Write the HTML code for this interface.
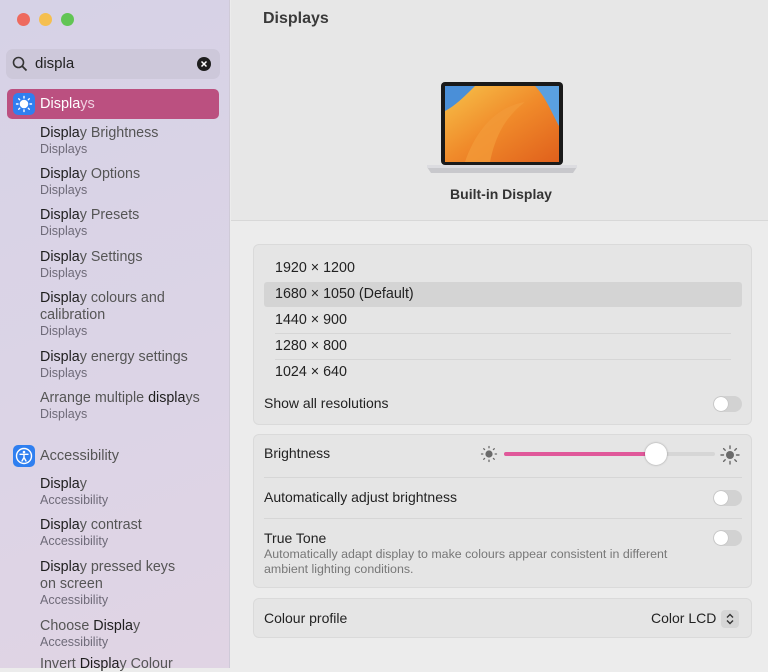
<!DOCTYPE html>
<html><head><meta charset="utf-8"><style>
*{margin:0;padding:0;box-sizing:border-box}
body{width:768px;height:668px;overflow:hidden;font-family:"Liberation Sans",sans-serif;background:#ececec;position:relative;color:#222}
.sb{position:absolute;left:0;top:0;width:230px;height:668px;background:linear-gradient(160deg,#d6d2e6 0%,#dcd4e6 60%,#e0d4e4 100%);border-right:1px solid #cfcad8}
.a{position:absolute;font-size:14px;white-space:nowrap}
.sb .a{font-size:14.3px}
.t{color:#555}.t b{color:#1e1e1e;font-weight:normal}
.sb .s{color:#6e6a78;font-size:12.5px}
.dot{position:absolute;top:13px;width:13px;height:13px;border-radius:50%}
.main{position:absolute;left:231px;top:0;width:537px;height:668px}
.card{position:absolute;left:22px;width:499px;background:#e5e5e5;border:1px solid #dadada;border-radius:6px}
.tg{position:absolute;width:29px;height:16px;border-radius:8px;background:#d2d2d2}
.tg::after{content:"";position:absolute;left:1px;top:1px;width:14px;height:14px;border-radius:50%;background:#fff;box-shadow:0 0 1px rgba(0,0,0,.3)}
.sep{position:absolute;height:1px;background:#d6d6d6}
</style></head><body>
<div class="sb">
<div class="dot" style="left:17px;background:#ee6a5e"></div>
<div class="dot" style="left:39px;background:#f5bf4f"></div>
<div class="dot" style="left:61px;background:#61c554"></div>
<div style="position:absolute;left:6px;top:49px;width:214px;height:30px;background:#cdc8da;border-radius:7px"></div>
<svg style="position:absolute;left:12px;top:56px" width="16" height="16"><circle cx="6.5" cy="6.5" r="5" fill="none" stroke="#333" stroke-width="1.6"/><line x1="10.3" y1="10.3" x2="14.5" y2="14.5" stroke="#333" stroke-width="1.8"/></svg>
<div class="a" style="left:35px;top:55px;font-size:15px;color:#222">displa</div>
<svg style="position:absolute;left:197px;top:57px" width="14" height="14"><circle cx="7" cy="7" r="7" fill="#1e1e1e"/><path d="M4.5 4.5l5 5M9.5 4.5l-5 5" stroke="#fff" stroke-width="1.5"/></svg>
<div style="position:absolute;left:7px;top:89px;width:212px;height:30px;background:#bb5080;border-radius:5px"></div>
<div style="position:absolute;left:13px;top:93px;width:22px;height:22px;background:#2f7ff0;border-radius:5px"></div>
<svg style="position:absolute;left:13px;top:93px" width="22" height="22"><circle cx="11" cy="11" r="4.3" fill="#fff"/><g stroke="#fff" stroke-width="1.4" stroke-linecap="round"><path d="M11 3.5v1.5M11 17v1.5M3.5 11h1.5M17 11h1.5M5.7 5.7l1 1M15.3 15.3l1 1M5.7 16.3l1-1M15.3 6.7l1-1"/></g></svg>
<div class="a" style="left:40px;top:96px;font-size:14.5px;color:#fff">Displa<span style="color:#f0d0e0">ys</span></div>
<div class="a t" style="left:40px;top:125px"><b>Displa</b>y Brightness</div><div class="a s" style="left:40px;top:142px">Displays</div>
<div class="a t" style="left:40px;top:166px"><b>Displa</b>y Options</div><div class="a s" style="left:40px;top:183px">Displays</div>
<div class="a t" style="left:40px;top:207px"><b>Displa</b>y Presets</div><div class="a s" style="left:40px;top:224px">Displays</div>
<div class="a t" style="left:40px;top:249px"><b>Displa</b>y Settings</div><div class="a s" style="left:40px;top:266px">Displays</div>
<div class="a t" style="left:40px;top:290px"><b>Displa</b>y colours and</div><div class="a t" style="left:40px;top:307px">calibration</div><div class="a s" style="left:40px;top:324px">Displays</div>
<div class="a t" style="left:40px;top:349px"><b>Displa</b>y energy settings</div><div class="a s" style="left:40px;top:366px">Displays</div>
<div class="a t" style="left:40px;top:390px">Arrange multiple <b>displa</b>ys</div><div class="a s" style="left:40px;top:407px">Displays</div>
<div style="position:absolute;left:13px;top:445px;width:22px;height:22px;background:#2f7ff0;border-radius:5px"></div>
<svg style="position:absolute;left:13px;top:445px" width="22" height="22"><circle cx="11" cy="11" r="7.5" fill="none" stroke="#fff" stroke-width="1.4"/><circle cx="11" cy="7" r="1.3" fill="#fff"/><path d="M7 9.3h8M11 9.3v3.5M11 12.5l-2 3.5M11 12.5l2 3.5" stroke="#fff" stroke-width="1.4" fill="none" stroke-linecap="round"/></svg>
<div class="a t" style="left:40px;top:448px;font-size:14.5px">Accessibility</div>
<div class="a t" style="left:40px;top:476px"><b>Displa</b>y</div><div class="a s" style="left:40px;top:493px">Accessibility</div>
<div class="a t" style="left:40px;top:517px"><b>Displa</b>y contrast</div><div class="a s" style="left:40px;top:534px">Accessibility</div>
<div class="a t" style="left:40px;top:559px"><b>Displa</b>y pressed keys</div><div class="a t" style="left:40px;top:576px">on screen</div><div class="a s" style="left:40px;top:593px">Accessibility</div>
<div class="a t" style="left:40px;top:618px">Choose <b>Displa</b>y</div><div class="a s" style="left:40px;top:635px">Accessibility</div>
<div class="a t" style="left:40px;top:656px">Invert <b>Displa</b>y Colour</div>
</div>
<div class="main">
<div style="position:absolute;left:0;top:0;width:537px;height:221px;background:#e7e7e7;border-bottom:1px solid #d8d8d8"></div>
<div class="a" style="left:32px;top:10px;font-size:16px;font-weight:bold;color:#3a3a3a">Displays</div>
<svg style="position:absolute;left:194px;top:81px" width="154" height="96">
<defs><linearGradient id="w" x1="0" y1="0" x2="1" y2="1"><stop offset="0" stop-color="#f7c24a"/><stop offset=".5" stop-color="#f08a2a"/><stop offset="1" stop-color="#e0601c"/></linearGradient></defs>
<rect x="16" y="1" width="122" height="83" rx="4" fill="#1a1a1a"/>
<rect x="20" y="5" width="114" height="76" fill="url(#w)"/>
<path d="M20 5h30c-10 10-20 20-30 25z" fill="#4a8fd8"/><path d="M110 5h24v40c-8-15-14-30-24-40z" fill="#5aa0e0"/>
<path d="M40 81c10-30 30-55 60-60c-20 15-30 35-35 60z" fill="#f39a38" opacity=".8"/>
<path d="M2 86h150l-4 6H6z" fill="#c8c8cc"/><rect x="2" y="84" width="150" height="3" fill="#dcdce0"/>
</svg>
<div class="a" style="left:0;width:540px;text-align:center;top:186px;font-weight:bold;font-size:14px;color:#333">Built-in Display</div>
<div class="card" style="top:244px;height:181px">
<div class="a" style="left:21px;top:15px;font-size:14.3px">1920 × 1200</div>
<div style="position:absolute;left:10px;top:37px;width:478px;height:25px;background:#d4d4d4;border-radius:3px"></div>
<div class="a" style="left:21px;top:41px;font-size:14.3px">1680 × 1050 (Default)</div>
<div class="a" style="left:21px;top:67px;font-size:14.3px">1440 × 900</div>
<div class="sep" style="left:21px;top:88px;width:456px"></div>
<div class="a" style="left:21px;top:93px;font-size:14.3px">1280 × 800</div>
<div class="sep" style="left:21px;top:114px;width:456px"></div>
<div class="a" style="left:21px;top:119px;font-size:14.3px">1024 × 640</div>
<div class="a" style="left:10px;top:150px">Show all resolutions</div>
<div class="tg" style="left:459px;top:151px"></div>
</div>
<div class="card" style="top:434px;height:154px">
<div class="a" style="left:10px;top:10px">Brightness</div>
<svg style="position:absolute;left:226px;top:10px" width="18" height="18"><circle cx="9" cy="9" r="3.6" fill="#6a6a6a"/><g stroke="#6a6a6a" stroke-width="1.3" stroke-linecap="round"><path d="M9 1.5v1.3M9 15.2v1.3M1.5 9h1.3M15.2 9h1.3M3.7 3.7l.9.9M13.4 13.4l.9.9M3.7 14.3l.9-.9M13.4 4.6l.9-.9"/></g></svg>
<div style="position:absolute;left:250px;top:17px;width:211px;height:4px;border-radius:2px;background:#d6d6d6"></div>
<div style="position:absolute;left:250px;top:17px;width:152px;height:4px;border-radius:2px;background:#e0589a"></div>
<div style="position:absolute;left:391px;top:8px;width:22px;height:22px;border-radius:50%;background:#fff;box-shadow:0 0 2px rgba(0,0,0,.35)"></div>
<svg style="position:absolute;left:466px;top:10px" width="20" height="20"><circle cx="10" cy="10" r="4" fill="#6a6a6a"/><g stroke="#6a6a6a" stroke-width="1.4" stroke-linecap="round"><path d="M10 1v2.5M10 16.5V19M1 10h2.5M16.5 10H19M3.6 3.6l1.6 1.6M14.8 14.8l1.6 1.6M3.6 16.4l1.6-1.6M14.8 5.2l1.6-1.6"/></g></svg>
<div class="sep" style="left:10px;top:42px;width:478px"></div>
<div class="a" style="left:10px;top:54px">Automatically adjust brightness</div>
<div class="tg" style="left:459px;top:55px"></div>
<div class="sep" style="left:10px;top:83px;width:478px"></div>
<div class="a" style="left:10px;top:95px">True Tone</div>
<div class="tg" style="left:459px;top:95px"></div>
<div class="a" style="left:10px;top:112px;font-size:12.4px;color:#777">Automatically adapt display to make colours appear consistent in different</div>
<div class="a" style="left:10px;top:127px;font-size:12.4px;color:#777">ambient lighting conditions.</div>
</div>
<div class="card" style="top:598px;height:40px">
<div class="a" style="left:10px;top:11px">Colour profile</div>
<div class="a" style="left:397px;top:11px">Color LCD</div>
<div style="position:absolute;left:467px;top:11px;width:18px;height:18px;border-radius:4px;background:#d6d6d6"></div>
<svg style="position:absolute;left:467px;top:11px" width="18" height="18"><path d="M6 7.5l3-3 3 3M6 10.5l3 3 3-3" fill="none" stroke="#333" stroke-width="1.4"/></svg>
</div>
</div>
</body></html>
